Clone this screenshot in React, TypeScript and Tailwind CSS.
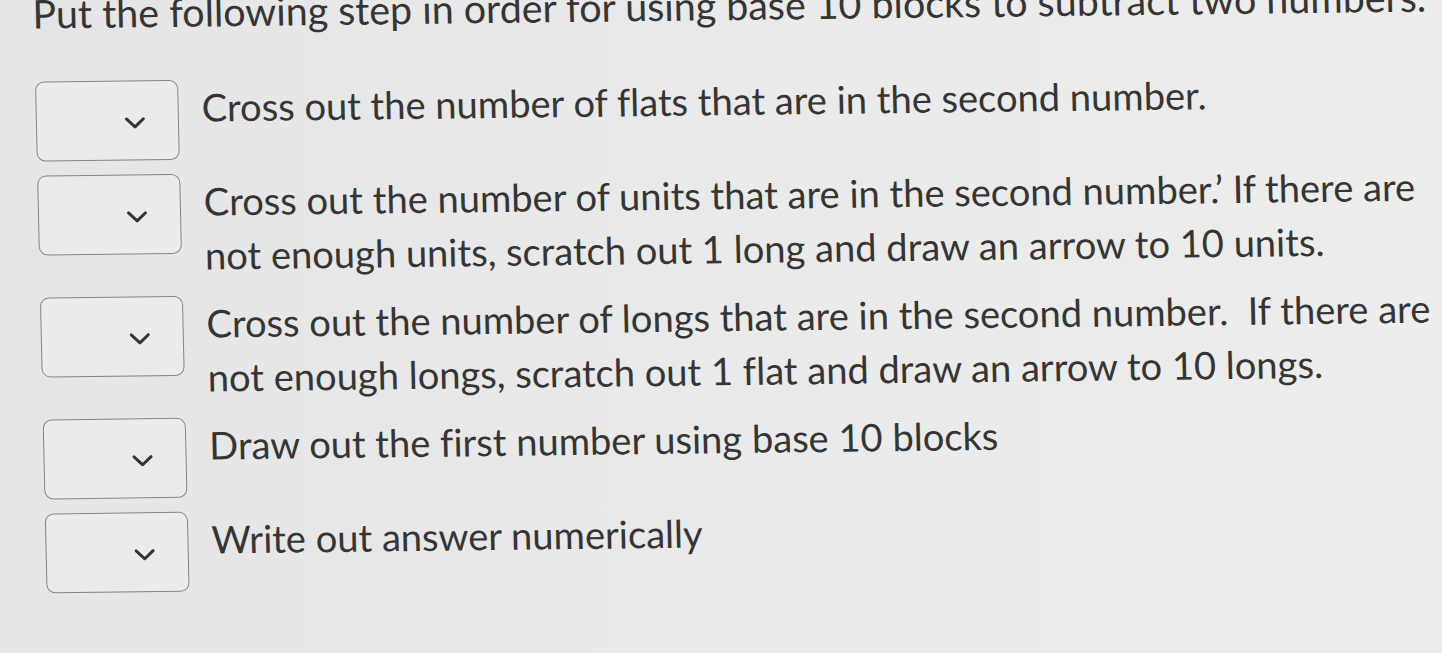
import React from 'react';

const steps: string[] = [
  'Cross out the number of flats that are in the second number.',
  'Cross out the number of units that are in the second number.\u2019 If there are not enough units, scratch out 1 long and draw an arrow to 10 units.',
  'Cross out the number of longs that are in the second number.  If there are not enough longs, scratch out 1 flat and draw an arrow to 10 longs.',
  'Draw out the first number using base 10 blocks',
  'Write out answer numerically',
];

const Chevron = () => (
  <svg width="22" height="13" viewBox="0 0 22 13" fill="none" className="absolute left-[87px] top-[35px]">
    <path d="M2.5 2.5 L11 10.5 L19.5 2.5" stroke="#353535" strokeWidth="3" strokeLinecap="round" strokeLinejoin="round" />
  </svg>
);

const StepSelect = () => (
  <div className="relative h-[80px] w-[143px] shrink-0 rounded-[9px] border-[1.5px] border-[#848484] bg-[#ebecea]">
    <Chevron />
  </div>
);

export default function App() {
  return (
    <div className="h-[653px] w-full overflow-hidden bg-gradient-to-r from-[#e4e5e4] via-[#e9eae9] to-[#ededec] font-['Lato',sans-serif] text-[#353535] [font-variant-ligatures:none]">
      <div className="origin-top-left rotate-[-0.7deg] skew-x-[0.6deg] pl-[32px]">
        <h1 className="-mt-[6px] whitespace-nowrap text-[39.4px] leading-[40px]">
          Put the following step in order for using base 10 blocks to subtract two numbers.
        </h1>
        <div className="mt-[48px] flex flex-col gap-[14px] pl-[1px]">
          {steps.map((s, i) => (
            <div key={i} className="flex items-start gap-[23px]">
              <StepSelect />
              <p className="w-[1236px] shrink-0 whitespace-pre-wrap text-[38.1px] leading-[54px]">{s}</p>
            </div>
          ))}
        </div>
      </div>
    </div>
  );
}
